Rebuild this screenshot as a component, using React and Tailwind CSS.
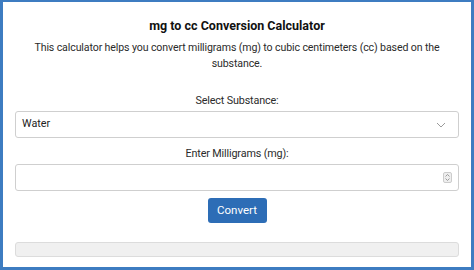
export default function App() {
  return (
    <div className="w-[474px] h-[270px] bg-white" style={{ fontFamily: 'Roboto, "Open Sans", sans-serif' }}>
      <div className="h-full border-t-2 border-x-[3px] border-b-[3px] border-[#3d7cc1] px-3 flex flex-col">
        <h1 className="text-center text-[12.5px] font-bold text-[#111] mt-[15px] leading-[18px]">
          mg to cc Conversion Calculator
        </h1>
        <p className="text-center text-[10.6px] tracking-[-0.12px] text-[#2b2b2b] leading-[16px] mt-[5px] px-4">
          This calculator helps you convert milligrams (mg) to cubic centimeters (cc) based on the substance.
        </p>
        <label className="text-center text-[10.8px] tracking-[-0.15px] text-[#2b2b2b] mt-[21px] leading-[16px]">Select Substance:</label>
        <div className="mt-[2px] h-[27px] border border-[#cfcfcf] rounded-[3px] flex items-center justify-between pl-[6px] pr-[12px]">
          <span className="text-[10.8px] text-[#222]">Water</span>
          <svg width="10" height="6" viewBox="0 0 10 6" fill="none">
            <path d="M1 1l4 4 4-4" stroke="#9a9a9a" strokeWidth="1" />
          </svg>
        </div>
        <label className="text-center text-[10.8px] tracking-[-0.15px] text-[#2b2b2b] mt-[8px] leading-[16px]">Enter Milligrams (mg):</label>
        <div className="mt-[2px] h-[27px] border border-[#cfcfcf] rounded-[3px] flex items-center justify-end pr-[6px]">
          <div className="w-[9px] h-[11px] bg-[#eee] border border-[#ccc] rounded-[2px] flex flex-col items-center justify-center gap-[1px]">
            <svg width="5" height="3" viewBox="0 0 5 3"><path d="M0.5 2.5l2-2 2 2" stroke="#888" fill="none" strokeWidth="0.8" /></svg>
            <svg width="5" height="3" viewBox="0 0 5 3"><path d="M0.5 0.5l2 2 2-2" stroke="#888" fill="none" strokeWidth="0.8" /></svg>
          </div>
        </div>
        <div className="flex justify-center mt-[7px]">
          <button className="w-[59px] h-[25px] bg-[#2d6db6] text-white text-[11.5px] rounded-[3px]">Convert</button>
        </div>
        <div className="mt-[19px] h-[15px] bg-[#f0f0f0] border border-[#dcdcdc] rounded-[3px]" />
      </div>
    </div>
  );
}
